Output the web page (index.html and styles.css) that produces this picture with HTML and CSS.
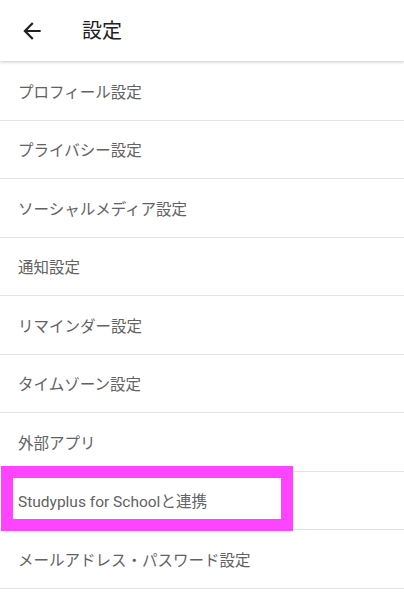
FILE: index.html
```html
<!DOCTYPE html>
<html lang="ja">
<head>
<meta charset="utf-8">
<link rel="stylesheet" href="styles.css">
</head>
<body>
<div class="app">
  <header class="toolbar">
    <span class="back">
      <svg width="26" height="26" viewBox="0 0 24 24"><path d="M20 11H7.83l5.59-5.59L12 4l-8 8 8 8 1.41-1.41L7.83 13H20v-2z" fill="#212121"/></svg>
    </span>
    <h1 class="title">設定</h1>
  </header>
  <ul class="list">
    <li class="item">プロフィール設定</li>
    <li class="item">プライバシー設定</li>
    <li class="item">ソーシャルメディア設定</li>
    <li class="item">通知設定</li>
    <li class="item">リマインダー設定</li>
    <li class="item">タイムゾーン設定</li>
    <li class="item">外部アプリ</li>
    <li class="item highlight-row">Studyplus for Schoolと連携<span class="highlight"></span></li>
    <li class="item">メールアドレス・パスワード設定</li>
  </ul>
</div>
</body>
</html>
```

FILE: styles.css
```css
html, body {
  margin: 0;
  padding: 0;
  background: #ffffff;
}
body {
  font-family: Roboto, "Noto Sans CJK JP", sans-serif;
  width: 404px;
  height: 592px;
  overflow: hidden;
}
.toolbar {
  height: 61px;
  display: flex;
  align-items: center;
  background: #ffffff;
  box-shadow: 0 1px 3px rgba(0, 0, 0, 0.22);
  position: relative;
  z-index: 1;
}
.back {
  width: 26px;
  height: 26px;
  margin-left: 19px;
  display: flex;
}
.title {
  margin: 0 0 0 37px;
  font-size: 20px;
  font-weight: 400;
  color: #212121;
  line-height: 1;
}
.list {
  list-style: none;
  margin: 0;
  padding: 1px 0 0;
}
.item {
  height: 57.5px;
  border-bottom: 1px solid #e3e3e3;
  display: flex;
  align-items: center;
  padding-left: 18px;
  font-size: 15.5px;
  color: #626262;
}
.highlight-row {
  position: relative;
}
.highlight {
  position: absolute;
  left: 1px;
  top: -6px;
  width: 268px;
  height: 41px;
  border: 12px solid #ff44ff;
}
```
